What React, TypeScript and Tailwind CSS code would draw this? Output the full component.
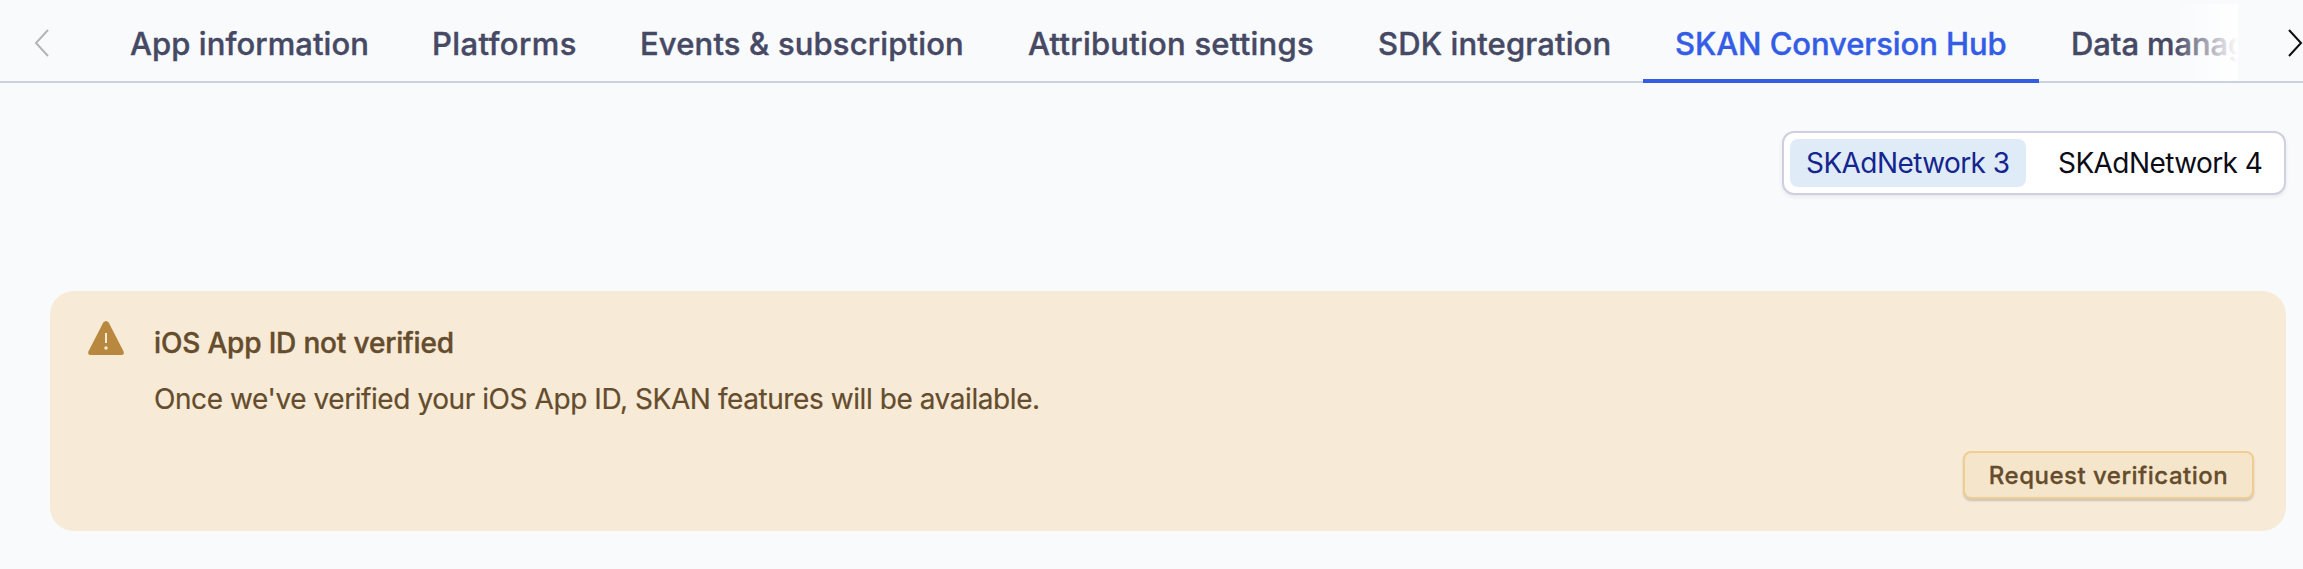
import clsx from "clsx";

const tabs = [
  { label: "App information", className: "w-[302px] tracking-[0.07px]" },
  { label: "Platforms", className: "w-[208px] tracking-[0.38px]" },
  { label: "Events & subscription", className: "w-[388px] tracking-[0.15px]" },
  { label: "Attribution settings", className: "w-[350px] tracking-[0.24px]" },
  { label: "SDK integration", className: "w-[297px] tracking-[0.13px]" },
  { label: "SKAN Conversion Hub", className: "w-[396px] tracking-[-0.08px]", active: true },
  { label: "Data management", className: "w-[340px] tracking-[-0.1px]" },
];

function Chevron({ className, points }: { className: string; points: string }) {
  return (
    <svg className={className} width="16" height="28" viewBox="0 0 16 28" fill="none" stroke="currentColor" strokeWidth="2">
      <polyline points={points} />
    </svg>
  );
}

function TabBar() {
  return (
    <nav className="flex h-[83px] w-full border-b-2 border-[#cad1df]">
      <button type="button" aria-label="Previous tabs" className="flex w-[98px] shrink-0 items-start pt-[29px] pl-[34px]">
        <Chevron className="text-[#b5b5b5]" points="14,1 2,14 14,27" />
      </button>
      <div className="relative -mb-[2px] flex h-[83px] w-[2140px] shrink-0 overflow-hidden">
        {tabs.map((tab) => (
          <button
            key={tab.label}
            type="button"
            className={clsx(
              "flex h-[83px] shrink-0 items-start border-b-4 pt-[20px] pl-[32px] text-left text-[31px] leading-[48px] font-medium whitespace-nowrap [-webkit-text-stroke:0.4px]",
              tab.active ? "border-[#345de6] text-[#345de6]" : "border-transparent text-[#464964]",
              tab.className,
            )}
          >
            {tab.label}
          </button>
        ))}
        <div className="absolute top-[4px] right-0 h-[77px] w-[64px] bg-linear-to-r from-white/0 to-white" />
      </div>
      <button type="button" aria-label="Next tabs" className="flex shrink-0 items-start pt-[29px] pl-[49px]">
        <Chevron className="text-[#0c0c14]" points="2,1 14,14 2,27" />
      </button>
    </nav>
  );
}

function VersionSwitch() {
  return (
    <div className="flex h-[64px] w-[504px] rounded-[12px] border-2 border-[#d0cfe1] bg-white p-[6px] text-[28px] leading-[48px] tracking-[-0.58px] whitespace-nowrap shadow-[0_2px_4px_rgba(0,0,0,0.07)]">
      <button type="button" className="h-[48px] w-[236px] rounded-[8px] bg-[#dfebf6] pl-[16px] text-left text-[#15258f]">
        SKAdNetwork 3
      </button>
      <button type="button" className="h-[48px] w-[252px] pl-[32px] text-left text-[#0c0c17]">
        SKAdNetwork 4
      </button>
    </div>
  );
}

function WarningIcon() {
  return (
    <svg className="mt-[30px] shrink-0" width="36" height="34" viewBox="0 0 36 34">
      <path d="M15.3 1.6 Q18 -1.6 20.7 1.6 L35.6 30.6 Q36.6 33.6 33.6 34 H2.4 Q-0.6 33.6 0.4 30.6 Z" fill="#b9883f" />
      <rect x="17" y="12" width="2" height="10" fill="#f7ead7" />
      <circle cx="18" cy="27" r="1.7" fill="#f7ead7" />
    </svg>
  );
}

function VerificationBanner() {
  return (
    <section className="flex h-[240px] w-[2236px] rounded-[24px] bg-[#f7ead7] pl-[38px] text-[#644c2c]">
      <WarningIcon />
      <div className="flex flex-1 flex-col pl-[30px] text-[28px] whitespace-nowrap">
        <h2 className="mt-[32px] leading-[40px] font-medium tracking-[-0.17px] [-webkit-text-stroke:0.4px]">iOS App ID not verified</h2>
        <p className="mt-[16px] leading-[40px] tracking-[-0.43px] [-webkit-text-stroke:0.2px]">
          Once we've verified your iOS App ID, SKAN features will be available.
        </p>
        <button
          type="button"
          className="mt-[32px] mr-[32px] h-[48px] w-[291px] self-end rounded-[8px] border-2 border-[#efce92] bg-[#f5e5ca] pt-px text-[24px] leading-[44px] font-medium tracking-[0.5px] shadow-[0_2px_2px_rgba(90,80,110,0.25)] [-webkit-text-stroke:0.3px]"
        >
          Request verification
        </button>
      </div>
    </section>
  );
}

export default function App() {
  return (
    <div className="h-[569px] w-[2303px] overflow-hidden bg-[#f9fafc] font-[Inter,sans-serif]">
      <TabBar />
      <main className="flex flex-col pl-[50px]">
        <div className="mt-[48px] mr-[17px] self-end">
          <VersionSwitch />
        </div>
        <div className="mt-[96px]">
          <VerificationBanner />
        </div>
      </main>
    </div>
  );
}
